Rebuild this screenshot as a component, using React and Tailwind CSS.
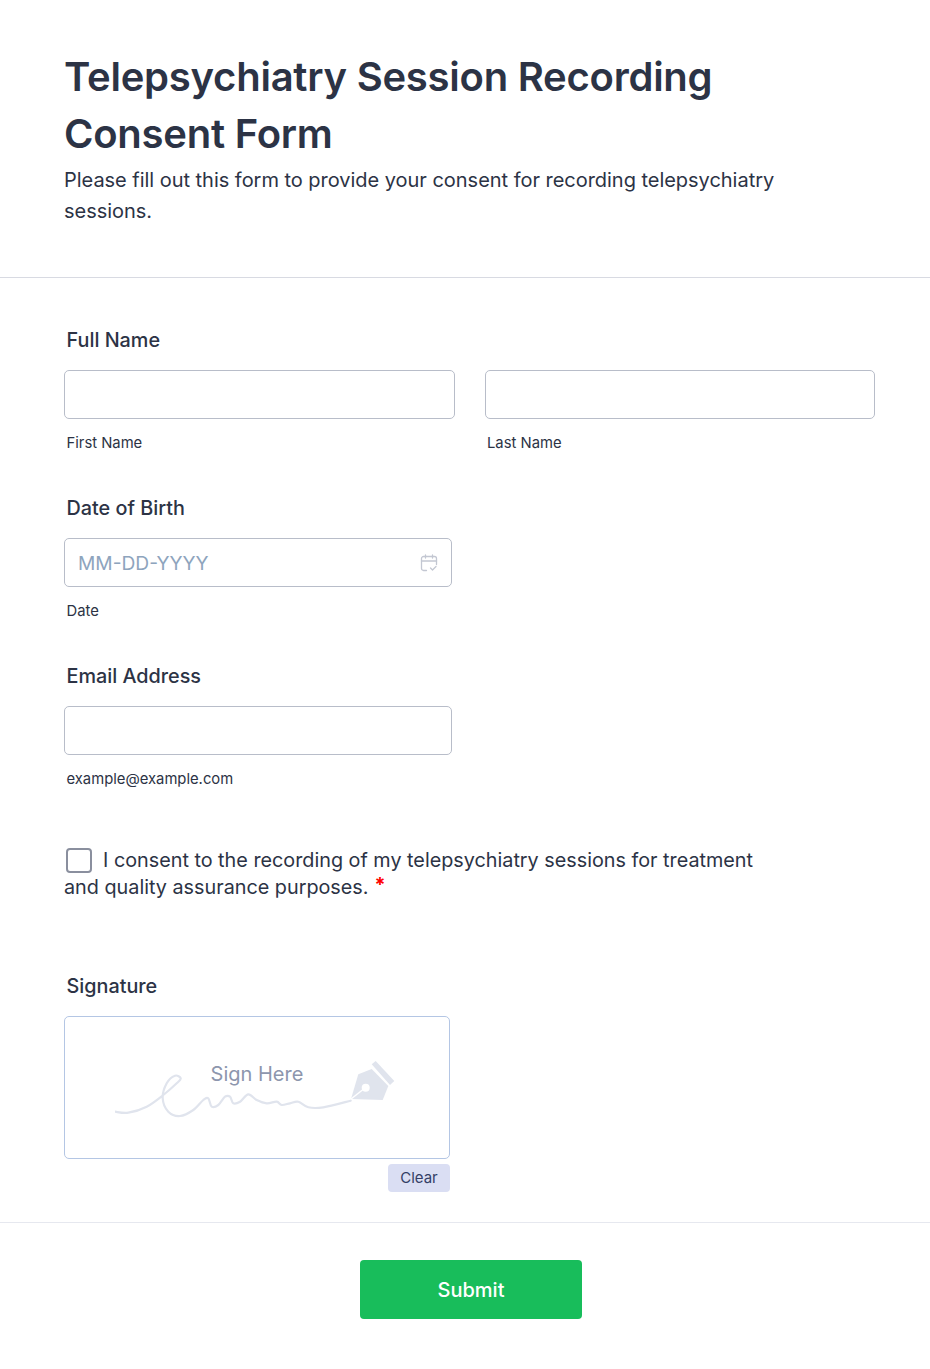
const inputClass = 'h-[49px] rounded-[5px] border border-[#b8bdc9] bg-white';

const Field = ({ label, children }) => (
    <div className="h-[168px] pt-[48px]">
        <div className="ml-[2.5px] h-[28px] text-[19.8px] leading-[29px] font-medium text-[#2c3345]">{label}</div>
        <div className="mt-[16px]">{children}</div>
    </div>
);

const SubLabel = ({ children }) => (
    <div className="ml-[2.5px] mt-[15px] text-[14.8px] leading-[18px] text-[#2c3345]">{children}</div>
);

const CalendarIcon = () => (
    <svg width="18" height="18" viewBox="0 0 18 18" fill="none" stroke="#c3c7d2" strokeWidth="1.3" strokeLinecap="round" strokeLinejoin="round">
        <path d="M6.500 16.500H3.500a2 2 0 0 1-2-2V4.500a2 2 0 0 1 2-2h11a2 2 0 0 1 2 2v6" />
        <path d="M1.500 7h15" />
        <path d="M5.500 1v3M12.500 1v3" />
        <path d="M10.500 14l2 2 3.500-3.500" />
    </svg>
);

const strokePoints = [
    [0, 50.7], [13.3, 51.7], [31.7, 45.7], [48.3, 34], [61.7, 22.3], [65.7, 17.3], [60, 14.7], [51.7, 22.3],
    [47.7, 37.3], [53.3, 50.7], [65, 55], [78.3, 49], [88.3, 39], [93.3, 37.3], [96.7, 45.7], [103.3, 44],
    [110, 35.7], [115, 35.7], [118.3, 42.3], [125, 40.7], [133.3, 33.3], [141.7, 39], [151.7, 42.3], [161.7, 40.7],
    [166.7, 44], [175, 42.3], [183.3, 40.7], [193.3, 46.3], [208.3, 46.3], [235.7, 39.7],
];

// catmull-rom through the traced points
const smoothPath = (pts) => {
    let d = `M${pts[0][0]} ${pts[0][1]}`;
    for (let i = 0; i < pts.length - 1; i++) {
        const p0 = pts[Math.max(i - 1, 0)];
        const p1 = pts[i];
        const p2 = pts[i + 1];
        const p3 = pts[Math.min(i + 2, pts.length - 1)];
        const c1x = p1[0] + (p2[0] - p0[0]) / 6;
        const c1y = p1[1] + (p2[1] - p0[1]) / 6;
        const c2x = p2[0] - (p3[0] - p1[0]) / 6;
        const c2y = p2[1] - (p3[1] - p1[1]) / 6;
        d += `C${c1x} ${c1y} ${c2x} ${c2y} ${p2[0]} ${p2[1]}`;
    }
    return d;
};

const SignatureArt = () => (
    <svg width="282" height="62" viewBox="0 0 282 62" fill="none">
        <path d={smoothPath(strokePoints)} stroke="#e0e4ed" strokeWidth="2.2" strokeLinecap="round" strokeLinejoin="round" />
        <path d="M236 38L243.300 13.300L256.700 8L273.300 25L267.700 39Z" fill="#e0e4ed" />
        <path d="M236 38L250 27" stroke="#ffffff" strokeWidth="1.500" />
        <circle cx="250.700" cy="26.700" r="4" fill="#ffffff" />
        <path d="M256.700 3.300L260.700 0L279.300 20L275 24Z" fill="#e0e4ed" />
    </svg>
);

export default function App() {
    return (
        <div className="h-[1369px] bg-white text-[#2c3345] font-['Inter',sans-serif]">
            <header className="h-[278px] border-b border-[#d8dae2] pl-[64px] pr-[140px] pt-[48px]">
                <h1 className="text-[40px] leading-[57px] font-semibold tracking-[-0.24px]">Telepsychiatry Session Recording Consent Form</h1>
                <p className="mt-[3px] text-[20px] leading-[31px] font-[420] tracking-[-0.03px]">Please fill out this form to provide your consent for recording telepsychiatry sessions.</p>
            </header>

            <main className="pl-[64px] pr-[55px]">
                <Field label="Full Name">
                    <div className="flex gap-[30px]">
                        <div className="flex-1">
                            <div className={inputClass} />
                            <SubLabel>First Name</SubLabel>
                        </div>
                        <div className="flex-1">
                            <div className={inputClass} />
                            <SubLabel>Last Name</SubLabel>
                        </div>
                    </div>
                </Field>

                <Field label="Date of Birth">
                    <div className={`${inputClass} w-[388px] flex items-center justify-between pl-[13px] pr-[13px] text-[19.2px] text-[#8ea4bd]`}>
                        <span className="pt-[2px]">MM-DD-YYYY</span>
                        <CalendarIcon />
                    </div>
                    <SubLabel>Date</SubLabel>
                </Field>

                <Field label="Email Address">
                    <div className={`${inputClass} w-[388px]`} />
                    <SubLabel>example@example.com</SubLabel>
                </Field>

                <div className="w-[700px] h-[190px] pt-[65px] text-[19.8px] leading-[27px]">
                    <span className="inline-block align-[-6px] mr-[11px] ml-[2px] w-[26px] h-[25px] rounded-[4px] border-2 border-[#8a8f9e]" />
                    I consent to the recording of my telepsychiatry sessions for treatment and quality assurance purposes.
                    <span className="ml-[6px] align-[2px] leading-none font-bold text-[#f00]">*</span>
                </div>

                <div className="ml-[2.5px] h-[28px] text-[19.8px] leading-[28px] font-medium">Signature</div>
                <div className="mt-[16px] w-[386px]">
                    <div className="relative h-[143px] rounded-[5px] border border-[#b4c6e4]">
                        <div className="pt-[44px] text-center text-[20px] leading-[26px] text-[#8d96ad]">Sign Here</div>
                        <div className="absolute left-[50px] top-[44px]"><SignatureArt /></div>
                    </div>
                    <div className="mt-[5px] flex justify-end">
                        <div className="h-[28px] w-[62px] rounded-[4px] bg-[#dadef3] text-center text-[15px] leading-[28px] text-[#343e66]">Clear</div>
                    </div>
                </div>
            </main>

            <footer className="mt-[30px] flex justify-center border-t border-[#e6e8ef] pt-[37px]">
                <button className="ml-[12px] h-[59px] w-[222px] rounded-[4px] bg-[#18bd5b] text-[20px] font-medium text-white">Submit</button>
            </footer>
        </div>
    );
}
